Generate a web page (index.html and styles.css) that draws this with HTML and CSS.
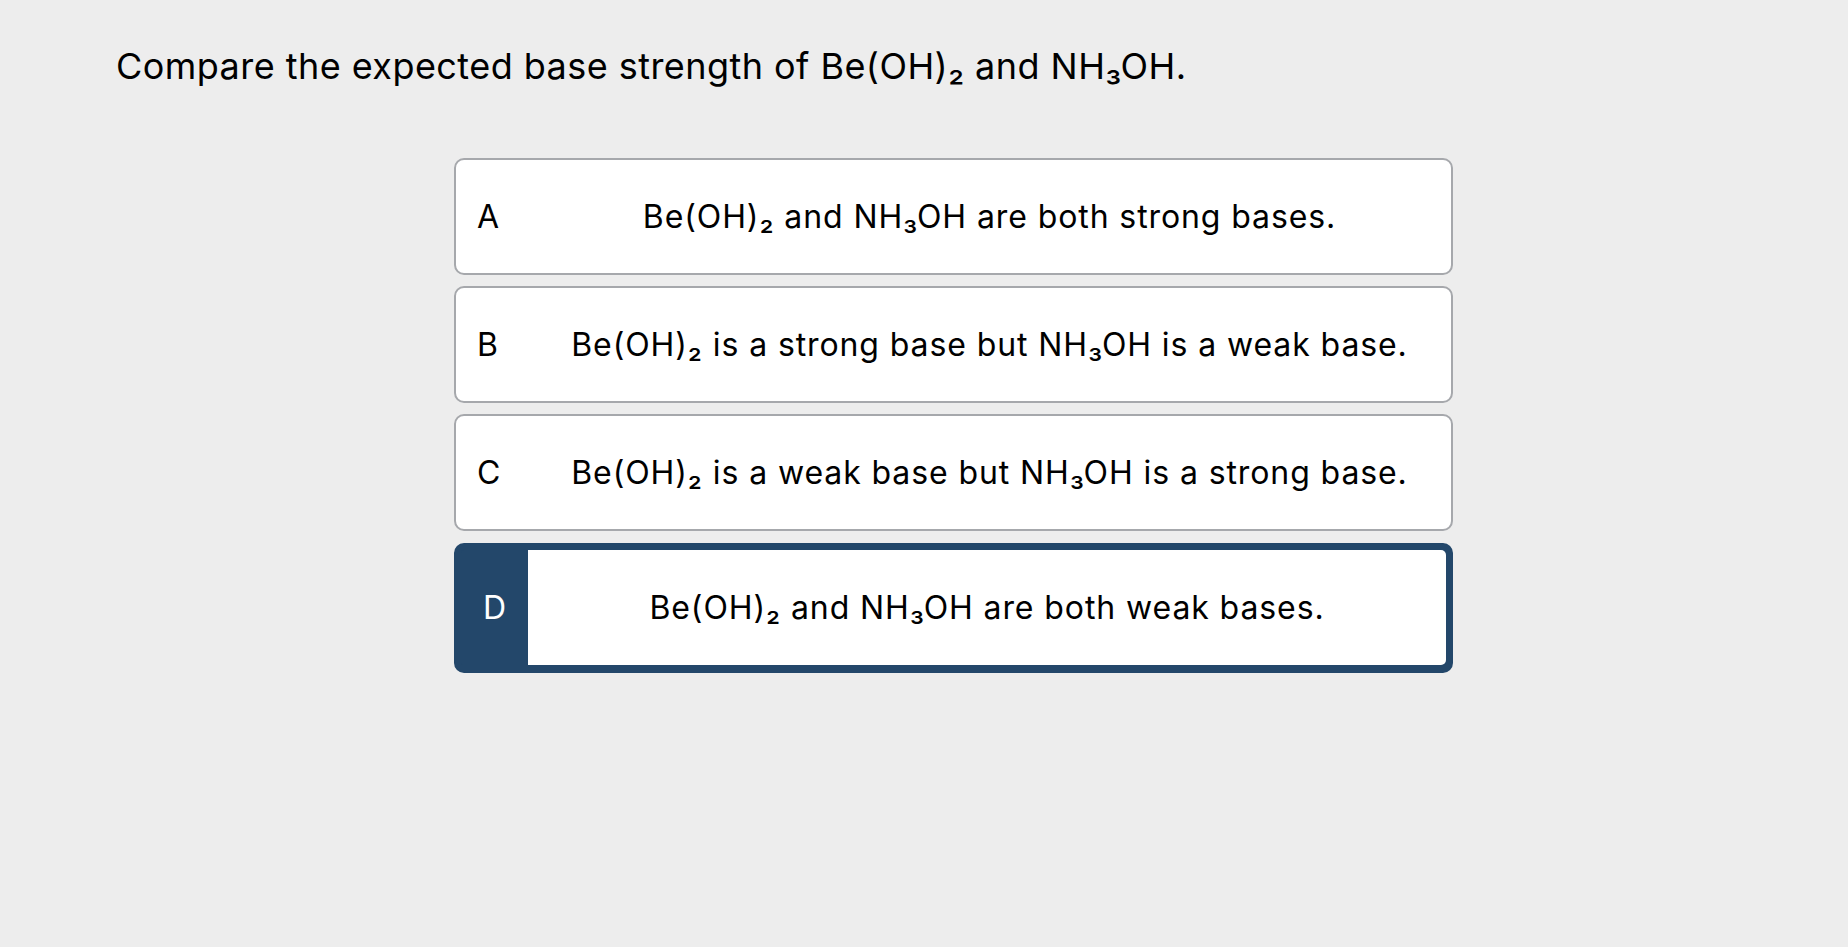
FILE: index.html
```html
<!DOCTYPE html>
<html lang="en">
	<head>
		<meta charset="utf-8" />
		<link rel="stylesheet" href="styles.css">
	</head>
	<body>
		<h1 class="question">Compare the expected base strength of Be(OH)₂ and NH₃OH.</h1>
		<section class="choices">
			<div class="choice">
				<span class="letter">A</span>
				<span class="answer">Be(OH)₂ and NH₃OH are both strong bases.</span>
			</div>
			<div class="choice">
				<span class="letter">B</span>
				<span class="answer">Be(OH)₂ is a strong base but NH₃OH is a weak base.</span>
			</div>
			<div class="choice">
				<span class="letter">C</span>
				<span class="answer">Be(OH)₂ is a weak base but NH₃OH is a strong base.</span>
			</div>
			<div class="choice selected">
				<span class="letter">D</span>
				<span class="answer">Be(OH)₂ and NH₃OH are both weak bases.</span>
			</div>
		</section>
	</body>
</html>
```

FILE: styles.css
```css
html, body {
	margin: 0;
	padding: 0;
	height: 100%;
	width: 100%;
	overflow: hidden;
}
body {
	font-family: Inter, "Noto Sans", sans-serif;
	background-color: #ededed;
	color: #000;
}
.question {
	margin: 0;
	padding: 44px 0 0 116px;
	font-size: 36px;
	font-weight: 400;
	line-height: 44px;
	letter-spacing: 0.45px;
}
.choices {
	display: flex;
	flex-direction: column;
	gap: 11px;
	width: 999px;
	margin: 70px 0 0 454px;
}
.choice {
	box-sizing: border-box;
	display: flex;
	height: 117px;
	border: 2px solid #a6a8ac;
	border-radius: 10px;
	background-color: #fff;
	font-size: 32px;
	letter-spacing: 0.9px;
}
.letter {
	box-sizing: border-box;
	width: 72px;
	padding-left: 21px;
	display: flex;
	align-items: center;
	letter-spacing: 0;
}
.answer {
	flex: 1;
	display: flex;
	align-items: center;
	justify-content: center;
}
.choice.selected {
	height: 130px;
	margin-top: 1px;
	border: 7px solid #23476a;
	border-bottom-width: 8px;
	background-color: #23476a;
}
.selected .letter {
	width: 67px;
	padding-left: 0;
	justify-content: center;
	color: #fff;
}
.selected .answer {
	background-color: #fff;
	border-radius: 0 5px 5px 0;
}
```
